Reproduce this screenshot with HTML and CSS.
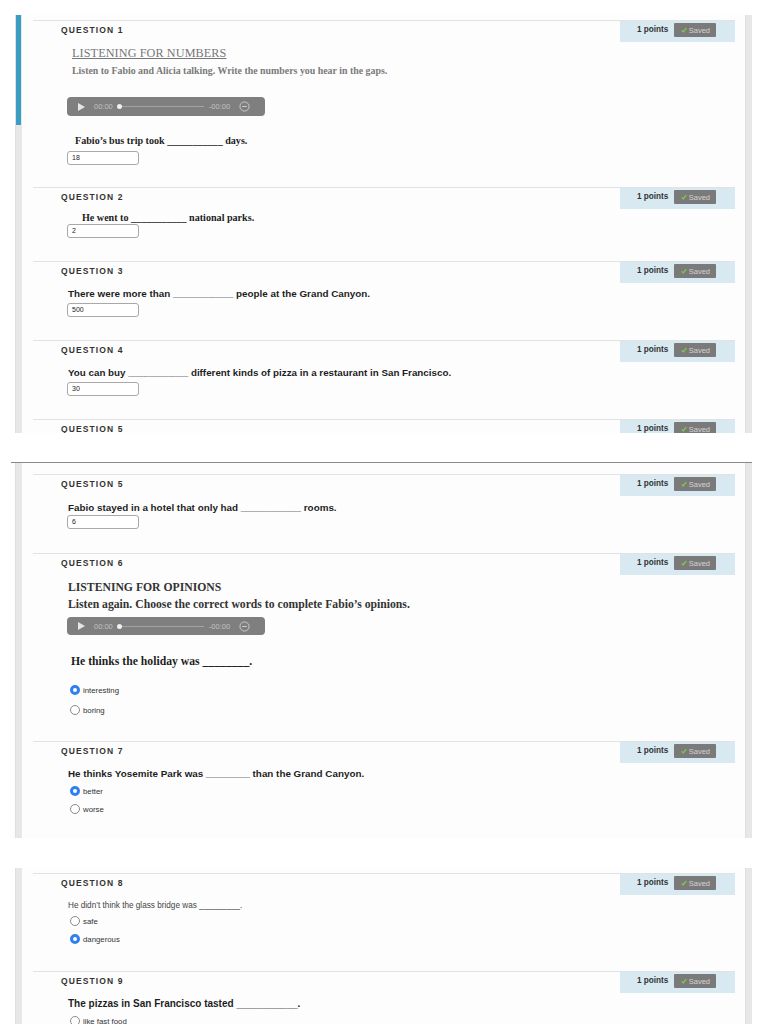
FILE: index.html
```html
<!DOCTYPE html>
<html lang="en">
<head>
<meta charset="utf-8">
<title>Quiz</title>
<link rel="stylesheet" href="styles.css">
</head>
<body>

<div class="shot shot-first">
  <div class="strip strip-left"><div class="strip-accent"></div></div>
  <div class="shot-body">

    <section class="question">
      <header class="q-head">
        <span class="q-label">QUESTION 1</span>
        <div class="points"><span class="points-text">1 points</span><span class="saved"><svg class="check" viewBox="0 0 8 8"><path d="M1 4.5 L3 6.5 L7 1.5" fill="none" stroke="#7ed23a" stroke-width="1.6"/></svg>Saved</span></div>
      </header>
      <div class="q-body q1-body">
        <div class="intro-title">LISTENING FOR NUMBERS</div>
        <div class="intro-sub">Listen to Fabio and Alicia talking. Write the numbers you hear in the gaps.</div>
        <div class="audio audio-q1">
          <svg class="play" viewBox="0 0 8 9"><path d="M0 0 L8 4.5 L0 9 Z" fill="#e6e6e6"/></svg>
          <span class="time">00:00</span>
          <span class="track"><span class="knob"></span></span>
          <span class="time time-end">-00:00</span>
          <svg class="vol" viewBox="0 0 12 12"><circle cx="6" cy="6" r="5" fill="none" stroke="#cfcfcf" stroke-width="1"/><path d="M3.5 6 H8.5" stroke="#cfcfcf" stroke-width="1"/></svg>
        </div>
        <p class="prompt serif prompt-q1">Fabio’s bus trip took ___________ days.</p>
        <div class="answer">18</div>
      </div>
    </section>

    <section class="question">
      <header class="q-head">
        <span class="q-label">QUESTION 2</span>
        <div class="points"><span class="points-text">1 points</span><span class="saved"><svg class="check" viewBox="0 0 8 8"><path d="M1 4.5 L3 6.5 L7 1.5" fill="none" stroke="#7ed23a" stroke-width="1.6"/></svg>Saved</span></div>
      </header>
      <div class="q-body q2-body">
        <p class="prompt serif prompt-q2">He went to ___________ national parks.</p>
        <div class="answer answer-tight">2</div>
      </div>
    </section>

    <section class="question">
      <header class="q-head">
        <span class="q-label">QUESTION 3</span>
        <div class="points"><span class="points-text">1 points</span><span class="saved"><svg class="check" viewBox="0 0 8 8"><path d="M1 4.5 L3 6.5 L7 1.5" fill="none" stroke="#7ed23a" stroke-width="1.6"/></svg>Saved</span></div>
      </header>
      <div class="q-body q-sans-body">
        <p class="prompt sans">There were more than ___________ people at the Grand Canyon.</p>
        <div class="answer">500</div>
      </div>
    </section>

    <section class="question">
      <header class="q-head">
        <span class="q-label">QUESTION 4</span>
        <div class="points"><span class="points-text">1 points</span><span class="saved"><svg class="check" viewBox="0 0 8 8"><path d="M1 4.5 L3 6.5 L7 1.5" fill="none" stroke="#7ed23a" stroke-width="1.6"/></svg>Saved</span></div>
      </header>
      <div class="q-body q-sans-body">
        <p class="prompt sans prompt-q4">You can buy ___________ different kinds of pizza in a restaurant in San Francisco.</p>
        <div class="answer">30</div>
      </div>
    </section>

    <section class="question">
      <header class="q-head">
        <span class="q-label">QUESTION 5</span>
        <div class="points"><span class="points-text">1 points</span><span class="saved"><svg class="check" viewBox="0 0 8 8"><path d="M1 4.5 L3 6.5 L7 1.5" fill="none" stroke="#7ed23a" stroke-width="1.6"/></svg>Saved</span></div>
      </header>
    </section>

  </div>
  <div class="strip strip-right"></div>
</div>

<div class="shot shot-second">
  <div class="strip strip-left"></div>
  <div class="shot-body">

    <section class="question">
      <header class="q-head">
        <span class="q-label">QUESTION 5</span>
        <div class="points"><span class="points-text">1 points</span><span class="saved"><svg class="check" viewBox="0 0 8 8"><path d="M1 4.5 L3 6.5 L7 1.5" fill="none" stroke="#7ed23a" stroke-width="1.6"/></svg>Saved</span></div>
      </header>
      <div class="q-body q5-body">
        <p class="prompt sans">Fabio stayed in a hotel that only had ___________ rooms.</p>
        <div class="answer answer-q5">6</div>
      </div>
    </section>

    <section class="question">
      <header class="q-head">
        <span class="q-label">QUESTION 6</span>
        <div class="points"><span class="points-text">1 points</span><span class="saved"><svg class="check" viewBox="0 0 8 8"><path d="M1 4.5 L3 6.5 L7 1.5" fill="none" stroke="#7ed23a" stroke-width="1.6"/></svg>Saved</span></div>
      </header>
      <div class="q-body q6-body">
        <div class="section-title">LISTENING FOR OPINIONS</div>
        <div class="section-sub">Listen again. Choose the correct words to complete Fabio’s opinions.</div>
        <div class="audio audio-q6">
          <svg class="play" viewBox="0 0 8 9"><path d="M0 0 L8 4.5 L0 9 Z" fill="#e6e6e6"/></svg>
          <span class="time">00:00</span>
          <span class="track"><span class="knob"></span></span>
          <span class="time time-end">-00:00</span>
          <svg class="vol" viewBox="0 0 12 12"><circle cx="6" cy="6" r="5" fill="none" stroke="#cfcfcf" stroke-width="1"/><path d="M3.5 6 H8.5" stroke="#cfcfcf" stroke-width="1"/></svg>
        </div>
        <p class="prompt serif prompt-q6">He thinks the holiday was ________.</p>
        <ul class="options options-q6">
          <li class="option"><span class="radio radio-on"></span>interesting</li>
          <li class="option"><span class="radio"></span>boring</li>
        </ul>
      </div>
    </section>

    <section class="question">
      <header class="q-head">
        <span class="q-label">QUESTION 7</span>
        <div class="points"><span class="points-text">1 points</span><span class="saved"><svg class="check" viewBox="0 0 8 8"><path d="M1 4.5 L3 6.5 L7 1.5" fill="none" stroke="#7ed23a" stroke-width="1.6"/></svg>Saved</span></div>
      </header>
      <div class="q-body q-sans-body">
        <p class="prompt sans">He thinks Yosemite Park was ________ than the Grand Canyon.</p>
        <ul class="options">
          <li class="option"><span class="radio radio-on"></span>better</li>
          <li class="option"><span class="radio"></span>worse</li>
        </ul>
      </div>
    </section>

  </div>
  <div class="strip strip-right"></div>
</div>

<div class="shot shot-third">
  <div class="strip strip-left"></div>
  <div class="shot-body">

    <section class="question">
      <header class="q-head">
        <span class="q-label">QUESTION 8</span>
        <div class="points"><span class="points-text">1 points</span><span class="saved"><svg class="check" viewBox="0 0 8 8"><path d="M1 4.5 L3 6.5 L7 1.5" fill="none" stroke="#7ed23a" stroke-width="1.6"/></svg>Saved</span></div>
      </header>
      <div class="q-body q8-body">
        <p class="prompt sans-light">He didn’t think the glass bridge was _________.</p>
        <ul class="options">
          <li class="option"><span class="radio"></span>safe</li>
          <li class="option"><span class="radio radio-on"></span>dangerous</li>
        </ul>
      </div>
    </section>

    <section class="question">
      <header class="q-head">
        <span class="q-label">QUESTION 9</span>
        <div class="points"><span class="points-text">1 points</span><span class="saved"><svg class="check" viewBox="0 0 8 8"><path d="M1 4.5 L3 6.5 L7 1.5" fill="none" stroke="#7ed23a" stroke-width="1.6"/></svg>Saved</span></div>
      </header>
      <div class="q-body q-sans-body">
        <p class="prompt sans prompt-q9">The pizzas in San Francisco tasted ___________.</p>
        <ul class="options">
          <li class="option"><span class="radio"></span>like fast food</li>
        </ul>
      </div>
    </section>

  </div>
  <div class="strip strip-right"></div>
</div>

</body>
</html>
```

FILE: styles.css
```css
* { box-sizing: border-box; }

html, body {
  margin: 0;
  padding: 0;
  background: #ffffff;
}

body {
  font-family: "Liberation Sans", Arial, sans-serif;
  color: #222;
  width: 768px;
  height: 1024px;
  overflow: hidden;
}

p { margin: 0; }
ul { margin: 0; padding: 0; list-style: none; }

/* ---------- screenshot panels ---------- */
.shot {
  display: flex;
  margin-left: 15px;
  width: 737px;
  overflow: hidden;
  background: #fdfdfd;
}

.shot-first {
  height: 418px;
  margin-top: 15px;
}

.shot-second {
  height: 376px;
  margin-top: 29px;
  border-top: 1px solid #8a8a8a;
  margin-left: 11px;
  width: 741px;
  padding-left: 4px;
}

.shot-third {
  height: 156px;
  margin-top: 30px;
}

.strip {
  flex: 0 0 7px;
  background: #e7e7e7;
  border-left: 1px solid #dedede;
}

.strip-accent {
  width: 5px;
  height: 110px;
  background: #3a9dc2;
}

.shot-body {
  flex: 1;
  padding: 5px 10px 0 11px;
  background: #fdfdfd;
}

.shot-second .shot-body { padding-top: 11px; }

/* ---------- question ---------- */
.question {
  border-top: 1px solid #e2e2e2;
}

.q-head {
  display: flex;
  justify-content: space-between;
  height: 21px;
}

.q-label {
  padding: 4px 0 0 28px;
  font-size: 8.5px;
  line-height: 11px;
  font-weight: bold;
  letter-spacing: 1.1px;
  color: #333;
}

.points {
  width: 115px;
  height: 21px;
  background: #d8e9f1;
  display: flex;
  align-items: flex-start;
  padding: 2px 0 0 17px;
  gap: 6px;
}

.points-text {
  font-size: 8.2px;
  line-height: 14px;
  font-weight: bold;
  color: #333;
}

.saved {
  width: 42px;
  height: 14px;
  background: #7a7a7a;
  display: flex;
  align-items: center;
  justify-content: center;
  gap: 2px;
  font-size: 7.5px;
  color: #d4d4d4;
  border-radius: 1px;
}

.check { width: 6px; height: 6px; }

/* ---------- question bodies ---------- */
.q-body { padding-left: 35px; }

.q1-body { padding-bottom: 22px; padding-left: 34px; }
.q2-body { padding-bottom: 23px; padding-left: 34px; }
.q-sans-body { padding-bottom: 23px; }
.q5-body { padding-bottom: 24px; }
.q6-body { padding-bottom: 25px; }
.q8-body { padding-bottom: 26px; }

.intro-title {
  margin: 4px 0 0 5px;
  font-family: "Liberation Serif", "Times New Roman", serif;
  font-size: 12.2px;
  line-height: 14px;
  color: #777;
  text-decoration: underline;
  letter-spacing: 0.1px;
}

.intro-sub {
  margin: 4px 0 0 5px;
  font-family: "Liberation Serif", "Times New Roman", serif;
  font-weight: bold;
  font-size: 9.9px;
  line-height: 14px;
  color: #7a7a7a;
}

.section-title {
  margin-top: 6px;
  font-family: "Liberation Serif", "Times New Roman", serif;
  font-weight: bold;
  font-size: 11.7px;
  line-height: 14px;
  color: #333;
}

.section-sub {
  margin-top: 3px;
  font-family: "Liberation Serif", "Times New Roman", serif;
  font-weight: bold;
  font-size: 11.7px;
  line-height: 14px;
  color: #333;
}

/* ---------- audio player ---------- */
.audio {
  width: 198px;
  height: 19px;
  background: #7f7f7f;
  border-radius: 4px;
  display: flex;
  align-items: center;
  padding-left: 11px;
}

.audio-q1 { margin-top: 19px; }
.audio-q6 { margin-top: 5px; margin-left: -1px; height: 18px; }

.play { width: 7px; height: 8px; }

.time {
  margin-left: 9px;
  font-size: 7.5px;
  color: #c2c2c2;
}

.track {
  margin-left: 6px;
  width: 85px;
  height: 1px;
  background: #a3a3a3;
  position: relative;
}

.knob {
  position: absolute;
  left: -2px;
  top: -2px;
  width: 5px;
  height: 5px;
  border-radius: 50%;
  background: #f2f2f2;
}

.time-end { margin-left: 5px; }

.vol { width: 11px; height: 11px; margin-left: 9px; }

/* ---------- prompts ---------- */
.prompt {
  font-weight: bold;
  color: #1e1e1e;
}

.serif {
  font-family: "Liberation Serif", "Times New Roman", serif;
  font-size: 10.1px;
  line-height: 12px;
}

.sans {
  font-family: "Liberation Sans", Arial, sans-serif;
  font-size: 9.85px;
  line-height: 12px;
  margin-top: 5px;
}

.sans-light {
  font-family: "Liberation Sans", Arial, sans-serif;
  font-weight: normal;
  font-size: 8.2px;
  line-height: 10px;
  color: #444;
  margin-top: 6px;
}

.prompt-q1 { margin: 19px 0 0 8px; }
.prompt-q2 { margin: 3px 0 0 15px; }
.prompt-q4 { font-size: 9.8px; }
.prompt-q6 { margin: 20px 0 0 3px; font-size: 11.7px; line-height: 13px; }
.q5-body .sans { margin-top: 6px; }
.prompt-q9 { font-size: 10px; }

/* ---------- answers ---------- */
.answer {
  width: 72px;
  height: 14px;
  margin-top: 3px;
  margin-left: -1px;
  border: 1px solid #a9a9a9;
  border-radius: 3px;
  background: #fff;
  font-size: 7px;
  line-height: 12px;
  padding-left: 4px;
  color: #222;
}

.q1-body .answer { margin-top: 4px; margin-left: 0; }
.answer-tight { margin-top: 0; margin-left: 0; }
.answer-q5 { margin-top: 1px; }

/* ---------- radio options ---------- */
.options {
  margin-top: 5px;
  display: flex;
  flex-direction: column;
  gap: 6px;
}

.options-q6 { margin-top: 16px; gap: 8px; }
.q8-body .options { margin-top: 4px; }

.option {
  display: flex;
  align-items: center;
  height: 12px;
  font-size: 7.8px;
  color: #333;
  padding-left: 2px;
}

.radio {
  width: 10px;
  height: 10px;
  border-radius: 50%;
  border: 1px solid #8a8a8a;
  background: #fff;
  margin-right: 3px;
}

.radio-on {
  border: 3px solid #2f7ff0;
}
```
